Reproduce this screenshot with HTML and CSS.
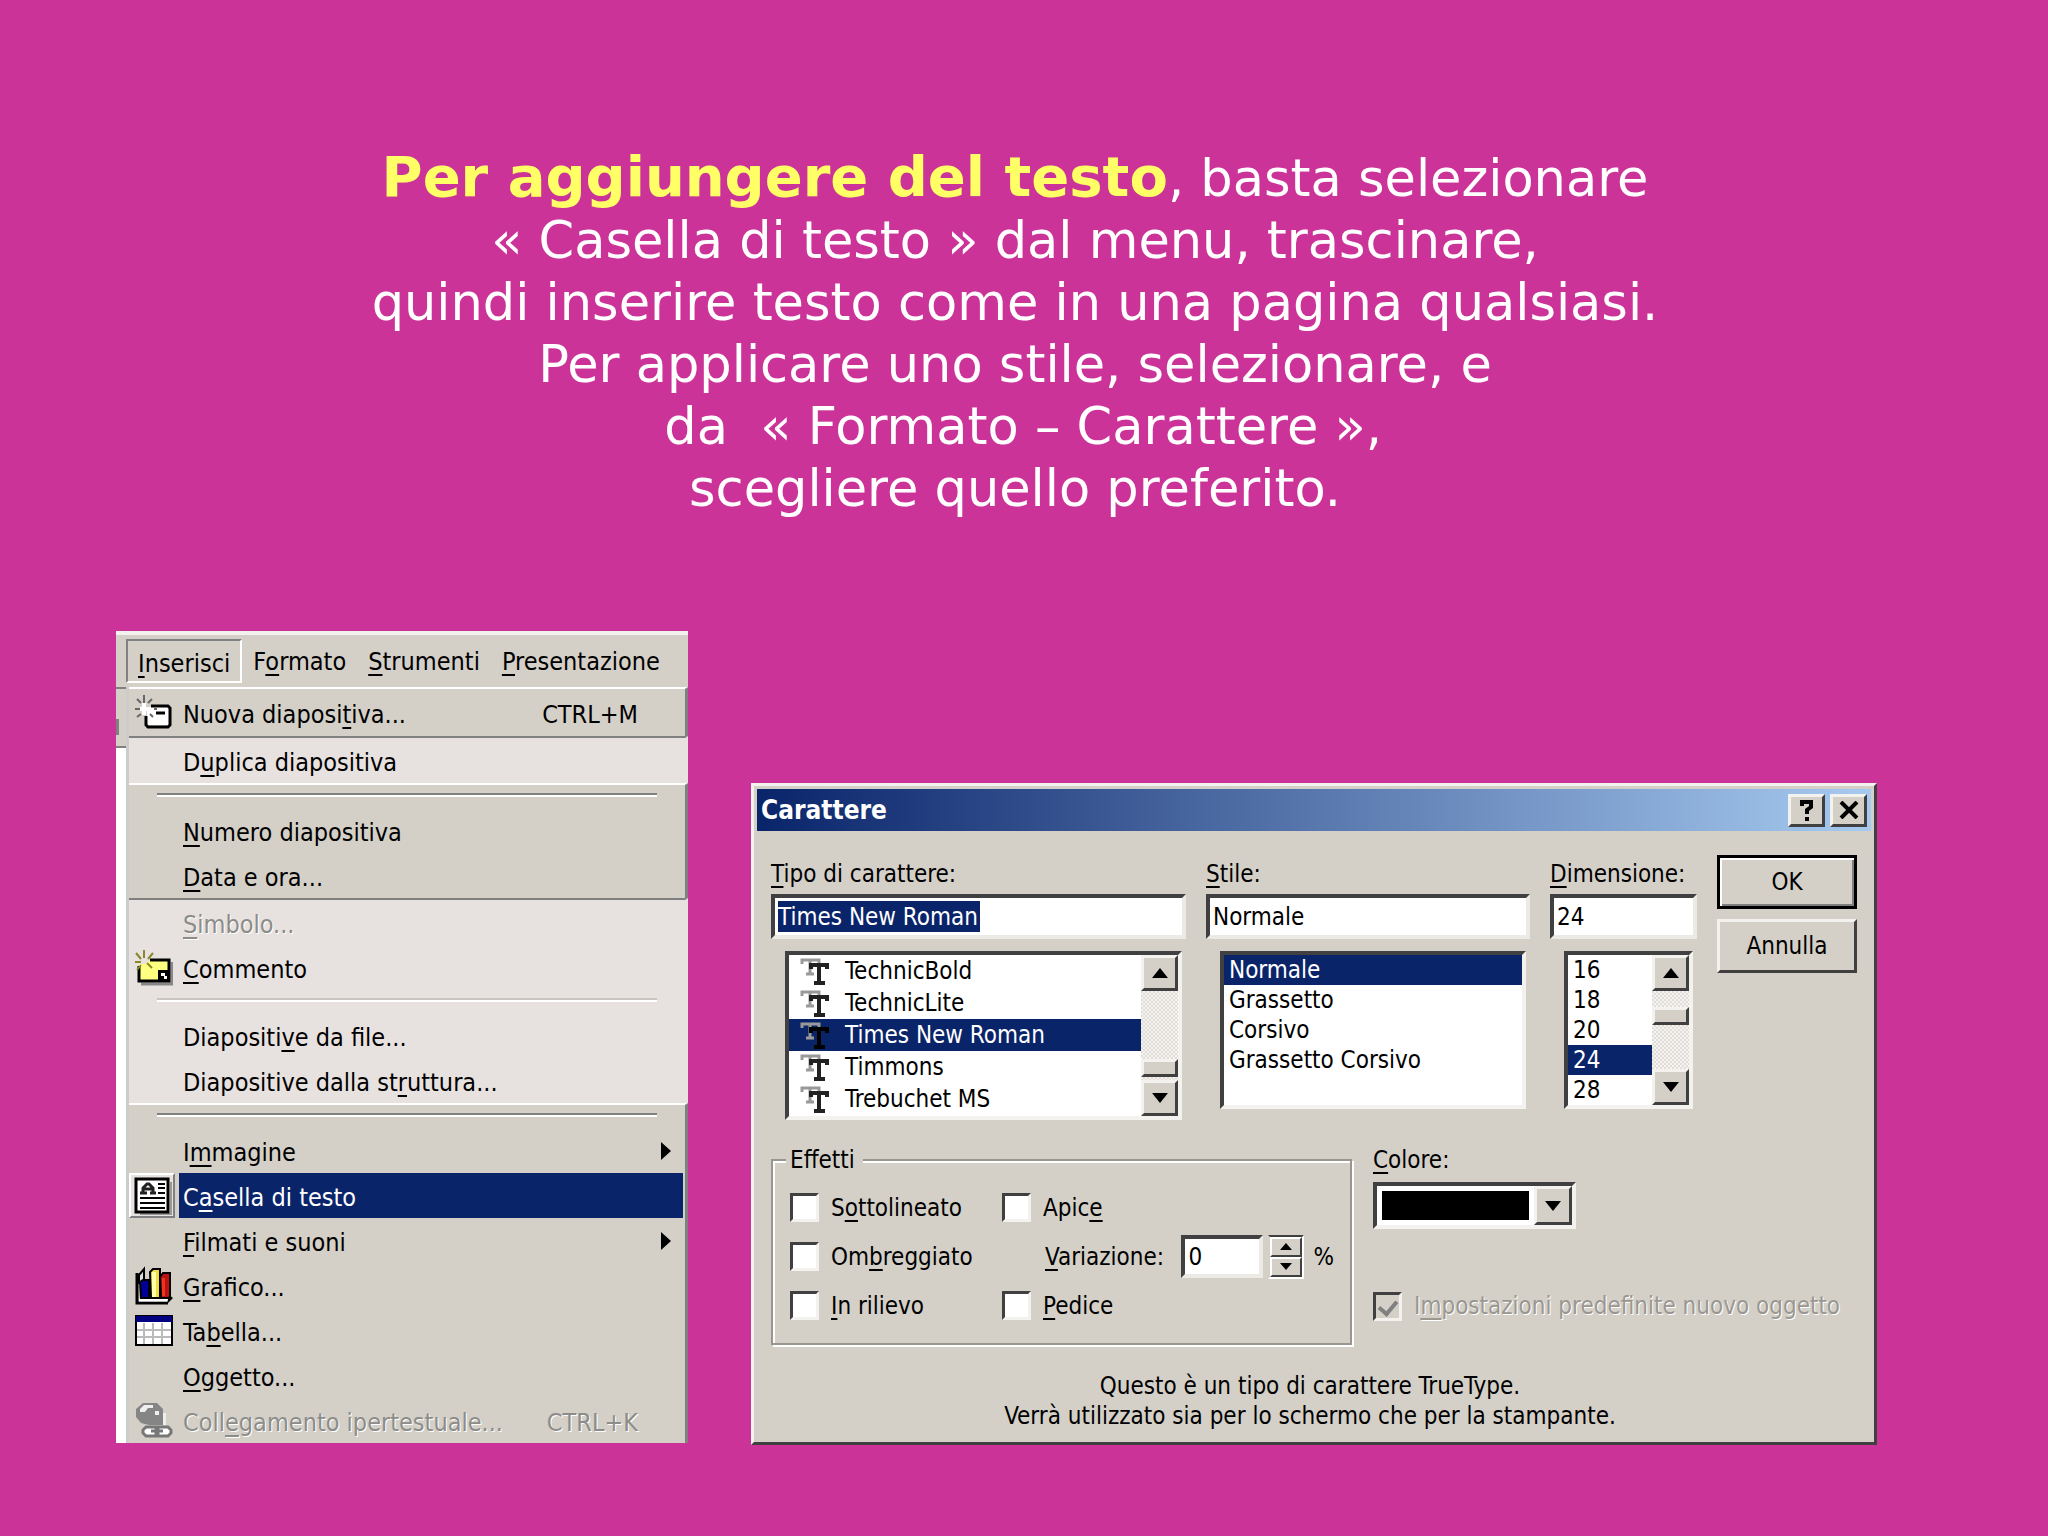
FILE: index.html
```html
<!DOCTYPE html>
<html lang="it">
<head>
<meta charset="utf-8">
<title>Per aggiungere del testo</title>
<link rel="stylesheet" href="styles.css">
</head>
<body>
<main class="slide">
  <p class="intro"><strong>Per aggiungere del testo</strong>, basta selezionare<br>
    « Casella di testo » dal menu, trascinare,<br>
    quindi inserire testo come in una pagina qualsiasi.<br>
    Per applicare uno stile, selezionare, e<br>
    &nbsp;da&nbsp; « Formato – Carattere »,<br>
    scegliere quello preferito.</p>

  <div class="figures">
    <section class="menu-shot" aria-label="Menu Inserisci">
      <nav class="menubar">
        <button class="menubar-item open"><u>I</u>nserisci</button>
        <button class="menubar-item">F<u>o</u>rmato</button>
        <button class="menubar-item"><u>S</u>trumenti</button>
        <button class="menubar-item"><u>P</u>resentazione</button>
      </nav>
      <div class="menu-area">
        <div class="page-edge"><span class="toolbar-edge"></span></div>
        <div class="menu">
          <div class="group first">
            <button class="item"><span class="icon"><svg width="38" height="36" viewBox="0 0 38 36"><path d="M12 12h22v18H12z" fill="#fff"/><path d="M16 11h17l2 2v17l-2 2H13l-2-2v-9" fill="none" stroke="#000" stroke-width="3"/><path d="M21 18h9" stroke="#000" stroke-width="3"/><path d="M9 0v8M2 4l4 4M17 4l-4 4M0 14h5M2 22l4-3M15 19l3 3M19 14h3" stroke="#666" stroke-width="2" fill="none"/><path d="M9 8v12M5 14h9" stroke="#fff" stroke-width="4"/></svg></span><span class="name">Nuova diaposi<u>t</u>iva...</span><kbd>CTRL+M</kbd></button>
          </div>
          <div class="group light">
            <button class="item"><span class="icon"></span><span class="name">D<u>u</u>plica diapositiva</span></button>
          </div>
          <div class="group">
            <hr>
            <button class="item"><span class="icon"></span><span class="name"><u>N</u>umero diapositiva</span></button>
            <button class="item"><span class="icon"></span><span class="name"><u>D</u>ata e ora...</span></button>
          </div>
          <div class="group light">
            <button class="item" disabled><span class="icon"></span><span class="name"><u>S</u>imbolo...</span></button>
            <button class="item"><span class="icon"><svg width="38" height="36" viewBox="0 0 38 36"><path d="M6 34h31V12" fill="none" stroke="#888" stroke-width="3"/><path d="M4 14h6l5-4h20v22H4z" fill="#ffff80"/><path d="M15 10h19v21H4V16" fill="none" stroke="#000" stroke-width="3"/><path d="M23 32V20h12v12z" fill="#000"/><path d="M26 23h4v3h-4zM29 26h3v3h-3z" fill="#fff"/><path d="M9 0v8M1 3l5 6M18 3l-5 6M0 12h6M12 13l5 5M2 20l4-5" stroke="#88882c" stroke-width="2" fill="none"/></svg></span><span class="name"><u>C</u>ommento</span></button>
            <hr>
            <button class="item"><span class="icon"></span><span class="name">Diapositi<u>v</u>e da file...</span></button>
            <button class="item"><span class="icon"></span><span class="name">Diapositive dalla st<u>r</u>uttura...</span></button>
          </div>
          <div class="group">
            <hr>
            <button class="item"><span class="icon"></span><span class="name">I<u>m</u>magine</span><svg class="more" width="10" height="18" viewBox="0 0 10 18"><path d="M0 0l10 9-10 9z"/></svg></button>
            <button class="item selected"><span class="icon raised"><svg width="38" height="38" viewBox="0 0 38 38"><path d="M6 37h31V5" fill="none" stroke="#999" stroke-width="2"/><path d="M2 2h32v33H2z" fill="#fff" stroke="#000" stroke-width="3"/><path d="M6 16h7M16 16h6M9 15V11l4-4h2l4 4v4M10 12h8" fill="none" stroke="#222" stroke-width="3"/><path d="M24 7h7M24 11h7M24 16h7M6 21h25M6 26h25M6 31h25" fill="none" stroke="#000" stroke-width="2"/></svg></span><span class="name">C<u>a</u>sella di testo</span></button>
            <button class="item"><span class="icon"></span><span class="name"><u>F</u>ilmati e suoni</span><svg class="more" width="10" height="18" viewBox="0 0 10 18"><path d="M0 0l10 9-10 9z"/></svg></button>
            <button class="item"><span class="icon"><svg width="38" height="40" viewBox="0 0 38 40"><path d="M2 7v30h31" fill="none" stroke="#000" stroke-width="3"/><path d="M4 34h30" stroke="#fff" stroke-width="3"/><path d="M4 9l5-6v14H4z" fill="#ddd" stroke="#000" stroke-width="2"/><path d="M5 16l3-2h6v18H6z" fill="#000099" stroke="#000" stroke-width="2"/><path d="M15 6l3-3h7v29h-9z" fill="#eedd44" stroke="#000" stroke-width="2"/><path d="M17 6h4v25h-4z" fill="#ffffaa"/><path d="M25 11l3-4h7v25h-9z" fill="#bb1111" stroke="#000" stroke-width="2"/><path d="M27 12h3v18h-3z" fill="#ee3322"/><path d="M34 29l4 3-6 6z"/></svg></span><span class="name"><u>G</u>rafico...</span></button>
            <button class="item"><span class="icon"><svg width="38" height="32" viewBox="0 0 38 32"><path d="M1 1h36v29H1z" fill="#fff" stroke="#000" stroke-width="2"/><path d="M1 1h36v6H1z" fill="#000080"/><path d="M9 8v21M18 8v21M27 8v21M2 15h34M2 22h34" stroke="#bbb" stroke-width="2"/></svg></span><span class="name">Ta<u>b</u>ella...</span></button>
            <button class="item"><span class="icon"></span><span class="name"><u>O</u>ggetto...</span></button>
            <button class="item" disabled><span class="icon"><svg width="38" height="40" viewBox="0 0 38 40"><path d="M8 2h14l6 6v8l2 8H14l-8-2-5-6V8z" fill="#858585"/><path d="M5 8l4-4h9v3h-5l-3 4H5zM20 10h4v4h-4zM28 12h3v12h-3z" fill="#eee"/><path d="M11 26h10v9H11l-3-3v-3zM23 26h10l3 3v3l-3 3H23z" fill="#fff" stroke="#777" stroke-width="3"/><path d="M16 30h12" stroke="#777" stroke-width="3"/></svg></span><span class="name">Coll<u>e</u>gamento ipertestuale...</span><kbd>CTRL+K</kbd></button>
          </div>
        </div>
      </div>
    </section>

    <section class="dialog" aria-label="Carattere">
      <header class="titlebar">
        <h2>Carattere</h2>
        <button class="tool" aria-label="Guida"><svg width="16" height="22" viewBox="0 0 16 22"><path d="M3 7V3h9v5l-4 3v4" fill="none" stroke="#000" stroke-width="4"/><path d="M6 18h4v4H6z"/></svg></button>
        <button class="tool" aria-label="Chiudi"><svg width="20" height="18" viewBox="0 0 20 18"><path d="M2 1l16 16M18 1L2 17" stroke="#000" stroke-width="4"/></svg></button>
      </header>
      <form class="body">
        <div class="fields">
          <div class="field">
            <label for="family"><u>T</u>ipo di carattere:</label>
            <div class="textbox"><input id="family" class="marked" value="Times New Roman"></div>
            <div class="listbox fonts">
              <ul role="listbox" aria-label="Tipo di carattere">
                <li role="option"><svg class="tt" width="30" height="28" viewBox="0 0 30 28"><use href="#truetype"/></svg>TechnicBold</li>
                <li role="option"><svg class="tt" width="30" height="28" viewBox="0 0 30 28"><use href="#truetype"/></svg>TechnicLite</li>
                <li role="option" aria-selected="true"><svg class="tt" width="30" height="28" viewBox="0 0 30 28"><use href="#truetype"/></svg>Times New Roman</li>
                <li role="option"><svg class="tt" width="30" height="28" viewBox="0 0 30 28"><use href="#truetype"/></svg>Timmons</li>
                <li role="option"><svg class="tt" width="30" height="28" viewBox="0 0 30 28"><use href="#truetype"/></svg>Trebuchet MS</li>
              </ul>
              <div class="scrollbar low"><button type="button" class="arrow" aria-label="Su"><svg width="16" height="10" viewBox="0 0 16 10"><path d="M8 0l8 10H0z"/></svg></button><span class="thumb"></span><button type="button" class="arrow" aria-label="Giù"><svg width="16" height="10" viewBox="0 0 16 10"><path d="M0 0h16L8 10z"/></svg></button></div>
            </div>
          </div>
          <div class="field">
            <label for="style"><u>S</u>tile:</label>
            <div class="textbox"><input id="style" value="Normale"></div>
            <div class="listbox">
              <ul role="listbox" aria-label="Stile">
                <li role="option" aria-selected="true">Normale</li>
                <li role="option">Grassetto</li>
                <li role="option">Corsivo</li>
                <li role="option">Grassetto Corsivo</li>
              </ul>
            </div>
          </div>
          <div class="field">
            <label for="size"><u>D</u>imensione:</label>
            <div class="textbox"><input id="size" value="24"></div>
            <div class="listbox">
              <ul role="listbox" aria-label="Dimensione">
                <li role="option">16</li>
                <li role="option">18</li>
                <li role="option">20</li>
                <li role="option" aria-selected="true">24</li>
                <li role="option">28</li>
              </ul>
              <div class="scrollbar"><button type="button" class="arrow" aria-label="Su"><svg width="16" height="10" viewBox="0 0 16 10"><path d="M8 0l8 10H0z"/></svg></button><span class="thumb"></span><button type="button" class="arrow" aria-label="Giù"><svg width="16" height="10" viewBox="0 0 16 10"><path d="M0 0h16L8 10z"/></svg></button></div>
            </div>
          </div>
          <div class="actions">
            <button type="button" class="push default">OK</button>
            <button type="button" class="push">Annulla</button>
          </div>
        </div>

        <div class="options">
          <fieldset class="effects">
            <legend>Effetti</legend>
            <div class="checks">
              <label class="check"><input type="checkbox"><span>S<u>o</u>ttolineato</span></label>
              <label class="check"><input type="checkbox"><span>Apic<u>e</u></span></label>
              <label class="check"><input type="checkbox"><span>Om<u>b</u>reggiato</span></label>
              <div class="offset">
                <label for="offset"><u>V</u>ariazione:</label>
                <div class="textbox"><input id="offset" value="0"></div>
                <span class="spinner"><button type="button" aria-label="Aumenta"><svg width="12" height="7" viewBox="0 0 12 7"><path d="M6 0l6 7H0z"/></svg></button><button type="button" aria-label="Riduci"><svg width="12" height="7" viewBox="0 0 12 7"><path d="M0 0h12L6 7z"/></svg></button></span>
                <span>%</span>
              </div>
              <label class="check"><input type="checkbox"><span><u>I</u>n rilievo</span></label>
              <label class="check"><input type="checkbox"><span><u>P</u>edice</span></label>
            </div>
          </fieldset>
          <div class="side">
            <label for="color"><u>C</u>olore:</label>
            <div class="combo"><select id="color"><option aria-label="Nero"></option></select><span class="arrow"><svg width="16" height="10" viewBox="0 0 16 10"><path d="M0 0h16L8 10z"/></svg></span></div>
            <label class="check muted"><input type="checkbox" checked disabled><span>I<u>m</u>postazioni predefinite nuovo oggetto</span></label>
          </div>
        </div>

        <p class="note">Questo è un tipo di carattere TrueType.<br>Verrà utilizzato sia per lo schermo che per la stampante.</p>
      </form>
    </section>
  </div>
</main>
<svg class="defs" width="0" height="0" aria-hidden="true"><symbol id="truetype" viewBox="0 0 30 28"><path d="M2 7V3h17v4M10 3v13M6 17h8" fill="none" stroke="#999" stroke-width="3"/><path d="M11 12V8h16v4M19 8v17M14 26h11" fill="none" stroke="var(--front)" stroke-width="4"/></symbol></svg>
</body>
</html>
```
FILE: styles.css
```css
:root {
  --face: #d4d0c8;
  --face-light: #e7e2df;
  --navy: #0a246a;
  --shade: #808080;
  --dark: #404040;
  --front: #222;
}

* { box-sizing: border-box; }

body {
  margin: 0;
  min-height: 100vh;
  background: #cc3399;
  color: #000;
  font: 25px/30px "DejaVu Sans Condensed", "Noto Sans", sans-serif;
}

button, input, select { font: inherit; color: inherit; margin: 0; }
button { border: 0; padding: 0; background: none; }
svg { display: block; flex: none; }
.defs { position: absolute; }
u { text-decoration-thickness: 2px; text-underline-offset: 4px; text-decoration-skip-ink: none; }

.slide { padding: 147px 0 88px; }

.intro {
  margin: 0;
  height: 484px;
  padding-right: 18px;
  text-align: center;
  color: #fff;
  font: 51px/62px "DejaVu Sans", sans-serif;
}
.intro strong { color: #ffff66; font-size: 56px; line-height: 60px; }

.figures {
  display: grid;
  grid-template-columns: 572fr 1126fr;
  gap: 63px;
  align-items: start;
  padding: 0 171px 0 116px;
}

/* Insert menu */
.menu-shot { background: var(--face); border-top: 4px solid #f4f2ee; }
.menubar { display: flex; align-items: center; height: 52px; padding: 4px 0 4px 10px; }
.menubar-item { height: 44px; padding: 2px 11px 0; }
.menubar-item.open {
  padding: 5px 10px 0;
  border: 2px solid;
  border-color: var(--shade) #fff #fff var(--shade);
}
.menu-area { display: flex; }
.page-edge { width: 13px; background: #fff; border-right: 3px solid #ccc; }
.toolbar-edge {
  display: block;
  height: 61px;
  padding-top: 30px;
  background: var(--face);
  border: solid var(--shade);
  border-width: 2px 0;
}
.toolbar-edge::before {
  content: "";
  display: block;
  width: 3px;
  height: 16px;
  background: var(--shade);
}
.menu { flex: 1; }
.group { border-top: 2px solid #fff; border-right: 3px solid var(--shade); }
.group.light { background: var(--face-light); border-top-color: var(--shade); border-right-color: var(--face-light); }
.group.first .item { height: 47px; }
.group hr {
  height: 4px;
  margin: 8px 28px 11px;
  border: 0;
  border-top: 2px solid var(--shade);
  border-bottom: 2px solid #fff;
}
.group.light hr { border-top-color: #c8c4c0; }
.item { display: flex; align-items: center; width: 100%; height: 45px; padding-right: 2px; text-align: left; }
.item .icon { display: flex; flex: none; width: 48px; height: 45px; padding-left: 6px; align-items: center; }
.item .icon.raised {
  width: 46px;
  margin-right: 4px;
  padding-left: 3px;
  background: var(--face-light);
  border: 2px solid;
  border-color: #fff var(--shade) var(--shade) #fff;
}
.item .name, .item kbd { padding-top: 4px; line-height: 41px; }
.item .name { flex: 1; padding-left: 6px; }
.item.selected .name { padding-left: 4px; background: var(--navy); color: #fff; }
.item kbd { font-family: inherit; font-size: inherit; margin-right: 45px; }
.item .more { margin-right: 12px; }
.item:disabled { color: #8c8c88; text-shadow: 1px 1px #fff; }

/* Font dialog */
.dialog {
  margin-top: 152px;
  padding: 3px;
  background: var(--face);
  border: 3px solid;
  border-color: #f4f2ee var(--dark) var(--dark) #f4f2ee;
  font-size: 24px;
}
.titlebar {
  display: flex;
  align-items: center;
  gap: 5px;
  height: 42px;
  padding: 0 4px;
  background: linear-gradient(90deg, var(--navy), #a6caf0);
}
.titlebar h2 { flex: 1; margin: 0; color: #fff; font-size: 26px; }
.tool, .arrow, .thumb, .push {
  display: flex;
  align-items: center;
  justify-content: center;
  background: var(--face);
  border: 3px solid;
  border-color: #f4f2ee var(--dark) var(--dark) #f4f2ee;
}
.tool { width: 37px; height: 33px; }
.body { padding: 28px 14px 8px; }
.fields {
  display: grid;
  grid-template-columns: minmax(0, 415fr) minmax(0, 324fr) minmax(0, 147fr) minmax(0, 140fr);
  gap: 20px;
  height: 286px;
  align-items: start;
}
.field > label { display: block; margin-bottom: 5px; white-space: nowrap; }
.textbox {
  display: flex;
  height: 45px;
  padding: 3px;
  background: #fff;
  border: 4px solid;
  border-color: var(--dark) #eceae4 #eceae4 var(--dark);
}
.textbox input { width: 100%; border: 0; padding: 0; background: none; }
.textbox input.marked { flex: none; width: 202px; background: var(--navy); color: #fff; }
.listbox {
  display: flex;
  margin: 12px 4px 0 14px;
  background: #fff;
  border: 4px solid;
  border-color: var(--dark) #f4f2ee #f4f2ee var(--dark);
}
.listbox ul { flex: 1; margin: 0; padding: 0; list-style: none; }
.listbox li { padding-left: 5px; height: 30px; }
.listbox [aria-selected="true"] { background: var(--navy); color: #fff; --front: #000; }
.listbox:not(.fonts) { height: 158px; }
.listbox.fonts { height: 169px; }
.listbox.fonts li { display: flex; align-items: center; gap: 15px; height: 32px; padding-left: 11px; }
.scrollbar {
  display: flex;
  flex-direction: column;
  width: 37px;
  background: repeating-conic-gradient(#f6f4f0 0 25%, #e0ddd8 0 50%) 0 0 / 4px 4px;
}
.scrollbar .arrow { height: 36px; width: 100%; }
.scrollbar .thumb { height: 18px; margin: 16px 0 auto; }
.scrollbar.low .thumb { margin: auto 0 3px; }
.actions { display: grid; gap: 10px; margin-top: -4px; }
.push { height: 54px; }
.push.default { border-color: #000; box-shadow: inset 2px 2px #fff, inset -2px -2px var(--shade); }

.options {
  display: grid;
  grid-template-columns: minmax(0, 581fr) minmax(0, 484fr);
  gap: 21px;
  align-items: start;
}
.effects {
  margin: 0;
  min-width: 0;
  height: 200px;
  padding: 0 16px 0 17px;
  border: 2px solid #99968f;
  box-shadow: 2px 2px #fff, inset 2px 2px #fff;
}
.effects legend { padding: 0 8px 0 4px; margin-left: -4px; background: var(--face); }
.checks { display: grid; grid-template-columns: 212px 1fr; grid-auto-rows: 49px; align-items: center; padding-top: 8px; }
.check { display: flex; align-items: center; white-space: nowrap; }
.check input {
  appearance: none;
  width: 29px;
  height: 29px;
  margin: 0 12px 0 0;
  background: #fff;
  border: 3px solid;
  border-color: var(--dark) #f4f2ee #f4f2ee var(--dark);
}
.offset { display: flex; align-items: center; padding-left: 43px; }
.offset .textbox { width: 82px; height: 43px; margin: 0 5px 0 auto; }
.spinner { display: grid; width: 36px; margin-right: 9px; border: 2px solid; border-color: var(--dark) #fff #fff var(--face); }
.spinner button { display: flex; align-items: center; justify-content: center; height: 20px; border: 2px solid; border-color: #fff var(--dark) var(--dark) #fff; }
.side > label { display: block; }
.combo {
  display: flex;
  width: 203px;
  height: 47px;
  margin-top: 7px;
  background: #fff;
  border: 4px solid;
  border-color: var(--dark) #f4f2ee #f4f2ee var(--dark);
}
.combo select { appearance: none; flex: 1; margin: 5px; border: 0; border-radius: 0; background: #000; }
.combo .arrow { width: 38px; }
.side .check { display: flex; margin-top: 62px; }
.check.muted { color: #9a9791; text-shadow: 1px 1px #fff; }
.check input:disabled {
  display: grid;
  place-items: center;
  background: var(--face);
}
.check input:disabled::before {
  content: "";
  width: 8px;
  height: 14px;
  border: solid var(--shade);
  border-width: 0 4px 4px 0;
  rotate: 40deg;
}
.note { margin: 26px 8px 0 0; text-align: center; }
```
